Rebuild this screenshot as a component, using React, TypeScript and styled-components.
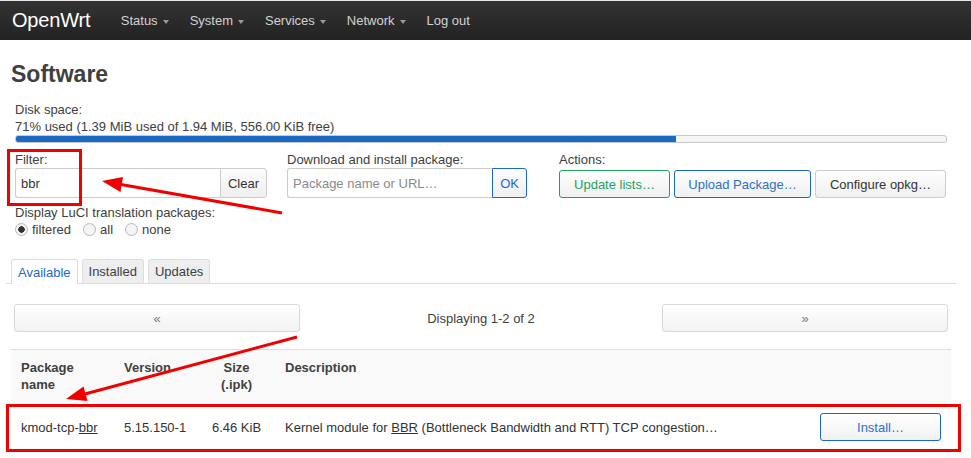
import styled, { createGlobalStyle } from "styled-components";

const GlobalStyle = createGlobalStyle`
  html, body {
    margin: 0;
    padding: 0;
    background: #fff;
  }
  body {
    font-family: "Liberation Sans", Arial, sans-serif;
    font-size: 13px;
    line-height: 17px;
    color: #404040;
  }
  * {
    box-sizing: border-box;
  }
`;

const Page = styled.div`
  position: relative;
  width: 971px;
  height: 458px;
  overflow: hidden;
`;

const Navbar = styled.div`
  height: 40px;
  display: flex;
  align-items: center;
  padding-left: 12px;
  border-top: 1px solid #e8e8e8;
  background: linear-gradient(to bottom, #333333, #222222);
`;

const Brand = styled.a`
  font-size: 20px;
  color: #fff;
  margin-right: 20px;
  letter-spacing: -0.2px;
`;

const NavItem = styled.a`
  display: flex;
  align-items: center;
  gap: 5px;
  padding: 0 10.5px;
  color: #d2d2d2;
  font-size: 13px;
`;

const Caret = styled.span`
  width: 0;
  height: 0;
  border-left: 3.5px solid transparent;
  border-right: 3.5px solid transparent;
  border-top: 4px solid #9a9a9a;
  margin-top: 2px;
`;

const Main = styled.div`
  padding: 0 20px 0 11px;
`;

const Title = styled.h2`
  margin: 0;
  padding-top: 20px;
  height: 61px;
  font-size: 23px;
  line-height: 28px;
  font-weight: bold;
  color: #404040;
`;

const Section = styled.div`
  padding: 0 4px;
`;

const Progress = styled.div`
  height: 8px;
  margin-top: 0;
  border: 1px solid #c8c8c8;
  border-radius: 3px;
  background: #f5f5f5;
  overflow: hidden;
`;

const ProgressFill = styled.div`
  height: 100%;
  background: #1a6ac4;
`;

const Controls = styled.div`
  display: grid;
  grid-template-columns: 272px 272px 1fr;
  margin-top: 9px;
`;

const Label = styled.div`
  line-height: 16px;
`;

const InputGroup = styled.div<{ w: number }>`
  display: flex;
  width: ${(p) => p.w}px;
  height: 30px;
`;

const TextInput = styled.div<{ placeholder?: boolean }>`
  flex: 1;
  display: flex;
  align-items: center;
  padding-left: 5px;
  border: 1px solid #cccccc;
  border-right: none;
  border-radius: 3px 0 0 3px;
  font-size: 13px;
  color: ${(p) => (p.placeholder ? "#8a8a8a" : "#333")};
  background: #fff;
`;

const AddonButton = styled.button<{ tone?: "blue" }>`
  padding: 0 7px;
  font-family: inherit;
  font-size: 13px;
  border: 1px solid ${(p) => (p.tone === "blue" ? "#1a6ac4" : "#cccccc")};
  border-radius: 0 3px 3px 0;
  color: ${(p) => (p.tone === "blue" ? "#1a6ac4" : "#333")};
  background: linear-gradient(to bottom, #fdfdfd, #efefef);
`;

const ActionRow = styled.div`
  display: flex;
  gap: 4px;
  margin-top: 2px;
`;

const tones = {
  green: { border: "#1aa260", text: "#1aa260" },
  blue: { border: "#1a6ac4", text: "#2a72c8" },
  neutral: { border: "#cccccc", text: "#333333" },
};

const Button = styled.button<{ tone: keyof typeof tones; w: number }>`
  width: ${(p) => p.w}px;
  height: 28px;
  font-family: inherit;
  font-size: 13px;
  border: 1px solid ${(p) => tones[p.tone].border};
  border-radius: 3px;
  color: ${(p) => tones[p.tone].text};
  background: linear-gradient(to bottom, #ffffff, #f0f0f0);
`;

const Hint = styled.div`
  margin-top: 6px;
`;

const RadioRow = styled.div`
  display: flex;
  align-items: center;
  height: 17px;
`;

const RadioOption = styled.label`
  display: flex;
  align-items: center;
  gap: 4px;
  margin-right: 12px;
`;

const RadioCircle = styled.span<{ checked?: boolean }>`
  width: 13px;
  height: 13px;
  border-radius: 50%;
  border: 1px solid #b8b8b8;
  background: ${(p) =>
    p.checked
      ? "radial-gradient(circle, #333 0 3px, #f4f4f4 3.5px)"
      : "#f4f4f4"};
`;

const Tabs = styled.div`
  display: flex;
  gap: 4px;
  margin: 21px -5px 0;
  padding-left: 5px;
  border-bottom: 1px solid #dddddd;
`;

const Tab = styled.div<{ active?: boolean }>`
  padding: 0 6px;
  display: flex;
  align-items: center;
  border: 1px solid #dddddd;
  border-bottom: none;
  border-radius: 3px 3px 0 0;
  margin-bottom: ${(p) => (p.active ? "-1px" : "0")};
  height: ${(p) => (p.active ? "25px" : "24px")};
  background: ${(p) => (p.active ? "#fff" : "#eeeeee")};
  color: ${(p) => (p.active ? "#1a6ac4" : "#404040")};
`;

const Pager = styled.div`
  display: grid;
  grid-template-columns: 286px 1fr 286px;
  align-items: center;
  margin: 20px 0 0;
  padding: 0 3px;
`;

const PagerButton = styled.button`
  height: 28px;
  font-family: inherit;
  font-size: 13px;
  color: #777;
  border: 1px solid #d8d8d8;
  border-radius: 3px;
  background: linear-gradient(to bottom, #ffffff, #f2f2f2);
`;

const PagerText = styled.div`
  text-align: center;
  color: #404040;
`;

const Table = styled.table`
  width: 940px;
  margin-top: 17px;
  border-collapse: collapse;
  table-layout: fixed;
`;

const HeadCell = styled.th<{ align?: "center" }>`
  padding: 9px 10px 10px;
  background: #f9f9f9;
  border-top: 1px solid #dddddd;
  text-align: ${(p) => p.align || "left"};
  vertical-align: top;
  font-weight: bold;
  color: #404040;
`;

const Cell = styled.td<{ align?: "center" | "right"; clip?: boolean }>`
  padding: 10px;
  height: 48px;
  text-align: ${(p) => p.align || "left"};
  vertical-align: middle;
  white-space: nowrap;
  overflow: ${(p) => (p.clip ? "hidden" : "visible")};
  text-overflow: ellipsis;
  color: #333;
`;

const Match = styled.span`
  text-decoration: underline;
`;

const Overlay = styled.svg`
  position: absolute;
  top: 0;
  left: 0;
  pointer-events: none;
`;

function Annotations() {
  return (
    <Overlay width="971" height="458" viewBox="0 0 971 458">
      <g stroke="#f20000" strokeWidth="3" fill="none">
        <rect x="8.5" y="150.5" width="72" height="54" />
        <rect x="7.5" y="405.5" width="952" height="45" />
        <line x1="282" y1="213" x2="121" y2="184.5" />
        <line x1="297" y1="337" x2="85" y2="394" />
      </g>
      <g fill="#f20000">
        <polygon points="102,181 123,177 120.5,192" />
        <polygon points="66,399 87.5,401 83.5,386.5" />
      </g>
    </Overlay>
  );
}

export default function App() {
  const nav = ["Status", "System", "Services", "Network"];
  return (
    <Page>
      <GlobalStyle />
      <Navbar>
        <Brand>OpenWrt</Brand>
        {nav.map((n) => (
          <NavItem key={n}>
            {n}
            <Caret />
          </NavItem>
        ))}
        <NavItem>Log out</NavItem>
      </Navbar>
      <Main>
        <Title>Software</Title>
        <Section>
          <div>Disk space:</div>
          <div>71% used (1.39 MiB used of 1.94 MiB, 556.00 KiB free)</div>
          <Progress>
            <ProgressFill style={{ width: "71%" }} />
          </Progress>
          <Controls>
            <div>
              <Label>Filter:</Label>
              <InputGroup w={252}>
                <TextInput>bbr</TextInput>
                <AddonButton>Clear</AddonButton>
              </InputGroup>
            </div>
            <div>
              <Label>Download and install package:</Label>
              <InputGroup w={240}>
                <TextInput placeholder>Package name or URL…</TextInput>
                <AddonButton tone="blue">OK</AddonButton>
              </InputGroup>
            </div>
            <div>
              <Label>Actions:</Label>
              <ActionRow>
                <Button tone="green" w={111}>Update lists…</Button>
                <Button tone="blue" w={137}>Upload Package…</Button>
                <Button tone="neutral" w={131}>Configure opkg…</Button>
              </ActionRow>
            </div>
          </Controls>
          <Hint>Display LuCI translation packages:</Hint>
          <RadioRow>
            <RadioOption>
              <RadioCircle checked />
              filtered
            </RadioOption>
            <RadioOption>
              <RadioCircle />
              all
            </RadioOption>
            <RadioOption>
              <RadioCircle />
              none
            </RadioOption>
          </RadioRow>
        </Section>
        <Tabs>
          <Tab active>Available</Tab>
          <Tab>Installed</Tab>
          <Tab>Updates</Tab>
        </Tabs>
        <Pager>
          <PagerButton>«</PagerButton>
          <PagerText>Displaying 1-2 of 2</PagerText>
          <PagerButton>»</PagerButton>
        </Pager>
        <Table>
          <colgroup>
            <col style={{ width: 103 }} />
            <col style={{ width: 84 }} />
            <col style={{ width: 77 }} />
            <col />
            <col style={{ width: 141 }} />
          </colgroup>
          <thead>
            <tr>
              <HeadCell>Package name</HeadCell>
              <HeadCell>Version</HeadCell>
              <HeadCell align="center">Size (.ipk)</HeadCell>
              <HeadCell>Description</HeadCell>
              <HeadCell />
            </tr>
          </thead>
          <tbody>
            <tr>
              <Cell>
                kmod-tcp-<Match>bbr</Match>
              </Cell>
              <Cell>5.15.150-1</Cell>
              <Cell align="center">6.46 KiB</Cell>
              <Cell clip>
                Kernel module for <Match>BBR</Match> (Bottleneck Bandwidth and
                RTT) TCP congestion…
              </Cell>
              <Cell align="right">
                <Button tone="blue" w={121}>Install…</Button>
              </Cell>
            </tr>
          </tbody>
        </Table>
      </Main>
      <Annotations />
    </Page>
  );
}
